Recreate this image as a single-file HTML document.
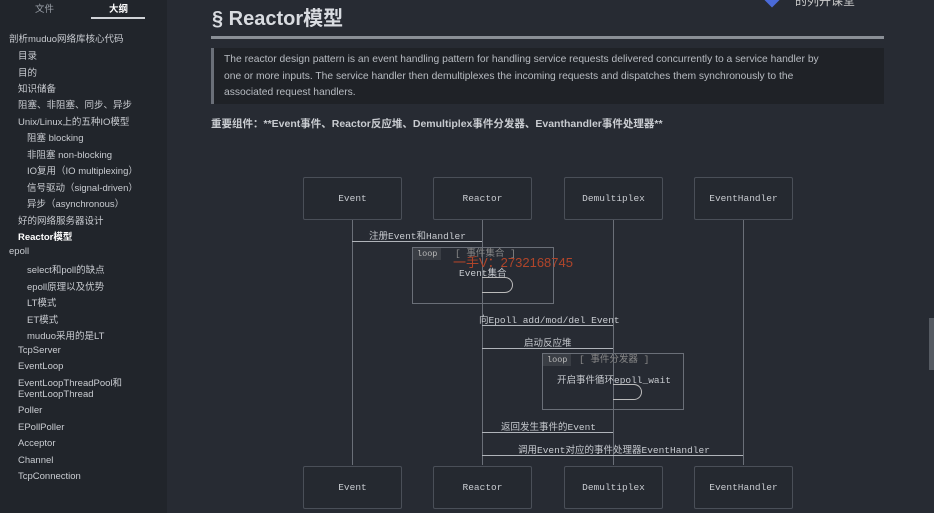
<!DOCTYPE html><html><head><meta charset="utf-8"><style>
body{margin:0;width:934px;height:513px;overflow:hidden;background:#272b33;font-family:"Liberation Sans","Noto Sans CJK SC",sans-serif;position:relative}
.sb{position:absolute;left:0;top:0;width:167px;height:513px;background:#21252b}
.sb div{position:absolute;font-size:9.5px;color:#c9ccd1;white-space:nowrap}
.m{font-family:"Liberation Mono","Noto Sans CJK SC",monospace;font-size:9.5px;color:#c8cbd0;position:absolute;white-space:nowrap}
.box{position:absolute;width:97px;height:41px;border:1px solid #4a4f58;background:#252930;border-radius:2px;color:#c8cbd0;font-family:"Liberation Mono",monospace;font-size:9.5px;text-align:center;line-height:41px}
.v{position:absolute;width:1px;background:#6a6f78;top:219px;height:246px}
.h{position:absolute;height:1px;background:#b0b4ba}
.lp{position:absolute;border:1px solid #6a6f78}
.tag{position:absolute;left:0;top:0;background:#3a3e45;color:#bbb;font-family:"Liberation Mono",monospace;font-size:8.5px;padding:0 4px;height:12px;line-height:12px}
</style></head><body>
<div class="sb">
<div style="left:35px;top:1px;color:#9aa0a8">文件</div>
<div style="left:109px;top:1px;font-weight:bold;color:#fff">大纲</div>
<div style="left:91px;top:17px;width:54px;height:2px;background:#d0d3d8"></div>
<div style="left:9px;top:31px">剖析muduo网络库核心代码</div>
<div style="left:18px;top:48px">目录</div>
<div style="left:18px;top:65px">目的</div>
<div style="left:18px;top:81px">知识储备</div>
<div style="left:18px;top:97px">阻塞、非阻塞、同步、异步</div>
<div style="left:18px;top:114px">Unix/Linux上的五种IO模型</div>
<div style="left:27px;top:130px">阻塞 blocking</div>
<div style="left:27px;top:147px">非阻塞 non-blocking</div>
<div style="left:27px;top:163px">IO复用（IO multiplexing）</div>
<div style="left:27px;top:180px">信号驱动（signal-driven）</div>
<div style="left:27px;top:196px">异步（asynchronous）</div>
<div style="left:18px;top:213px">好的网络服务器设计</div>
<div style="left:18px;top:229px;font-weight:bold;color:#fff">Reactor模型</div>
<div style="left:9px;top:246px">epoll</div>
<div style="left:27px;top:262px">select和poll的缺点</div>
<div style="left:27px;top:279px">epoll原理以及优势</div>
<div style="left:27px;top:295px">LT模式</div>
<div style="left:27px;top:312px">ET模式</div>
<div style="left:27px;top:328px">muduo采用的是LT</div>
<div style="left:18px;top:345px">TcpServer</div>
<div style="left:18px;top:361px">EventLoop</div>
<div style="left:18px;top:378px;line-height:11px">EventLoopThreadPool和<br>EventLoopThread</div>
<div style="left:18px;top:405px">Poller</div>
<div style="left:18px;top:422px">EPollPoller</div>
<div style="left:18px;top:438px">Acceptor</div>
<div style="left:18px;top:455px">Channel</div>
<div style="left:18px;top:471px">TcpConnection</div>
</div>
<div style="position:absolute;left:212px;top:2px;font-size:20px;font-weight:bold;color:#d8dbe0">§ Reactor模型</div>
<div style="position:absolute;left:766px;top:-7px;width:12px;height:12px;background:#4a6ad8;transform:rotate(45deg)"></div>
<div style="position:absolute;left:795px;top:-8px;font-size:12px;color:#ccc">的列开课堂</div>
<div style="position:absolute;left:211px;top:36px;width:673px;height:3px;background:#8a8f96"></div>
<div style="position:absolute;left:211px;top:48px;width:673px;height:56px;background:#1f2227;border-left:3px solid #6a6f78;box-sizing:border-box"></div>
<div style="position:absolute;left:224px;top:52px;font-size:10.3px;line-height:16.5px;color:#b8bcc2;white-space:nowrap">The reactor design pattern is an event handling pattern for handling service requests delivered concurrently to a service handler by<br>one or more inputs. The service handler then demultiplexes the incoming requests and dispatches them synchronously to the<br>associated request handlers.</div>
<div style="position:absolute;left:211px;top:116px;font-size:10.5px;font-weight:bold;color:#c9ccd1;white-space:nowrap">重要组件：**Event事件、Reactor反应堆、Demultiplex事件分发器、Evanthandler事件处理器**</div>
<div class="v" style="left:352px"></div><div class="v" style="left:482px"></div><div class="v" style="left:613px"></div><div class="v" style="left:743px"></div>
<div class="box" style="left:303px;top:177px">Event</div><div class="box" style="left:433px;top:177px">Reactor</div><div class="box" style="left:564px;top:177px">Demultiplex</div><div class="box" style="left:694px;top:177px">EventHandler</div>
<div class="box" style="left:303px;top:466px">Event</div><div class="box" style="left:433px;top:466px">Reactor</div><div class="box" style="left:564px;top:466px">Demultiplex</div><div class="box" style="left:694px;top:466px">EventHandler</div>
<div class="m" style="left:369px;top:228px">注册Event和Handler</div><div class="h" style="left:352px;top:241px;width:130px"></div>
<div class="lp" style="left:412px;top:247px;width:140px;height:55px"><div class="tag">loop</div><span class="m" style="left:42px;top:-3px;color:#888">[ 事件集合 ]</span></div>
<div class="m" style="left:459px;top:265px">Event集合</div>
<div style="position:absolute;left:482px;top:277px;width:30px;height:14px;border:1px solid #bbb;border-left:none;border-radius:0 8px 8px 0"></div>
<div style="position:absolute;left:453px;top:252px;color:#b0452a;font-size:13px">一手V：2732168745</div>
<div class="m" style="left:479px;top:312px">向Epoll add/mod/del Event</div><div class="h" style="left:482px;top:325px;width:131px"></div>
<div class="m" style="left:524px;top:335px">启动反应堆</div><div class="h" style="left:482px;top:348px;width:131px"></div>
<div class="lp" style="left:542px;top:353px;width:140px;height:55px"><div class="tag">loop</div><span class="m" style="left:36px;top:-3px;color:#888">[ 事件分发器 ]</span></div>
<div class="m" style="left:557px;top:372px">开启事件循环epoll_wait</div>
<div style="position:absolute;left:613px;top:384px;width:28px;height:14px;border:1px solid #bbb;border-left:none;border-radius:0 8px 8px 0"></div>
<div class="m" style="left:501px;top:419px">返回发生事件的Event</div><div class="h" style="left:482px;top:432px;width:131px"></div>
<div class="m" style="left:518px;top:442px">调用Event对应的事件处理器EventHandler</div><div class="h" style="left:482px;top:455px;width:261px"></div>
<div style="position:absolute;left:929px;top:318px;width:5px;height:52px;background:#555a62"></div>
</body></html>
